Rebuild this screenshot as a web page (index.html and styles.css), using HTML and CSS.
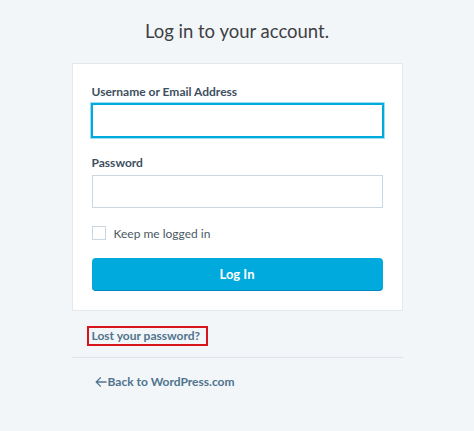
FILE: index.html
```html
<!DOCTYPE html>
<html lang="en">
<head>
<meta charset="utf-8">
<title>Log in</title>
<link rel="stylesheet" href="styles.css">
</head>
<body>
<div class="wrap">
  <h1 class="title">Log in to your account.</h1>
  <form class="card">
    <label class="label" for="user">Username or Email Address</label>
    <input class="input input--focus" id="user" type="text">
    <label class="label label--pw" for="pw">Password</label>
    <input class="input" id="pw" type="password">
    <div class="remember">
      <span class="checkbox"></span>
      <span class="remember-text">Keep me logged in</span>
    </div>
    <button class="btn" type="button">Log In</button>
  </form>
  <div class="lost"><a class="lost-link" href="#">Lost your password?</a></div>
  <div class="divider"></div>
  <div class="back"><a class="back-link" href="#"><svg class="arrow" width="12" height="12" viewBox="0 0 12 12" aria-hidden="true"><path d="M11.5 6H1.2M5.8 1.4L1.2 6l4.6 4.6" fill="none" stroke="currentColor" stroke-width="1.3"/></svg>Back to WordPress.com</a></div>
</div>
</body>
</html>
```
FILE: styles.css
```css
* { box-sizing: border-box; }
html, body { margin: 0; padding: 0; }
body {
  background: #f3f6f8;
  font-family: Lato, "Open Sans", sans-serif;
  color: #2e4453;
  width: 474px;
  height: 431px;
  overflow: hidden;
}
.wrap {
  width: 331px;
  margin: 0 auto;
}
.title {
  margin: 0;
  padding-top: 19px;
  height: 63px;
  font-size: 18.5px;
  line-height: 24px;
  font-weight: 400;
  text-align: center;
  color: #3d4145;
}
.card {
  display: flex;
  flex-direction: column;
  background: #fff;
  border: 1px solid #e4e9ed;
  padding: 19px 19px 19px;
}
.label {
  font-size: 12px;
  line-height: 17px;
  font-weight: 700;
  color: #3d4f5e;
  margin-bottom: 4px;
}
.label--pw { margin-top: 17px; }
.input {
  height: 33px;
  border: 1px solid #c8d7e1;
  background: #fff;
  outline: none;
  padding: 0 8px;
  font: inherit;
}
.input--focus {
  border: 1px solid #00aadc;
  box-shadow: 0 0 0 1px #00aadc, 0 0 0 2px #9fdff2;
}
.remember {
  display: flex;
  align-items: center;
  gap: 8px;
  margin-top: 18px;
  height: 14px;
}
.checkbox {
  width: 14px;
  height: 14px;
  border: 1px solid #c8d7e1;
  background: #fff;
}
.remember-text {
  font-size: 12px;
  color: #4a5963;
}
.btn {
  margin-top: 18px;
  height: 33px;
  border: 0;
  border-bottom: 1px solid #0087be;
  border-radius: 4px;
  background: #00aadc;
  color: #fff;
  font-family: inherit;
  font-size: 13px;
  font-weight: 700;
  padding: 0;
}
.lost {
  padding: 13px 0 0 15px;
  height: 46px;
}
.lost-link {
  display: inline-block;
  border: 2px solid #d8141c;
  padding: 1px 6px 1px 3px;
  font-size: 12px;
  line-height: 14px;
  font-weight: 700;
  color: #4f748e;
  text-decoration: none;
}
.divider {
  height: 1px;
  background: #dde3e8;
}
.back {
  padding: 14px 0 0 23px;
}
.back-link {
  display: inline-flex;
  align-items: center;
  gap: 1px;
  font-size: 12px;
  line-height: 16px;
  font-weight: 700;
  color: #4f748e;
  text-decoration: none;
}
.arrow {
  display: block;
}
```
